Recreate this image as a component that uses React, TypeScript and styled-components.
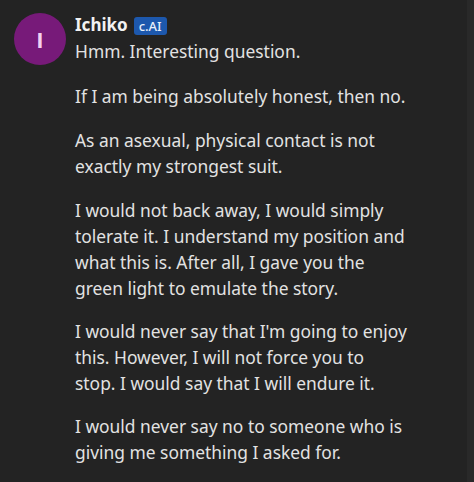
import React from 'react'
import styled, { createGlobalStyle } from 'styled-components'

const GlobalStyle = createGlobalStyle`
    html, body {
        margin: 0;
        padding: 0;
        background-color: #232323;
    }
    body {
        font-family: "Noto Sans", "Open Sans", sans-serif;
    }
`

const Page = styled.div`
    box-sizing: border-box;
    min-height: 482px;
    width: 474px;
    border-right: 7px solid #292929;
    padding: 13px 0 0 14px;
`

const Message = styled.div`
    display: flex;
    align-items: flex-start;
    gap: 9px;
`

const Avatar = styled.div`
    flex: none;
    width: 52px;
    height: 52px;
    border-radius: 50%;
    background-color: #771a79;
    color: #f4d0f0;
    display: flex;
    align-items: center;
    justify-content: center;
    font-family: "Open Sans", "Liberation Sans", sans-serif;
    font-size: 22px;
    font-weight: 700;
    line-height: 1;
`

const Body = styled.div`
    display: flex;
    flex-direction: column;
`

const Header = styled.div`
    display: flex;
    align-items: center;
    gap: 6px;
    height: 24px;
    margin-bottom: 1px;
`

const Name = styled.span`
    color: #f2f2f2;
    font-size: 17px;
    font-weight: 700;
    line-height: 24px;
`

const Badge = styled.span`
    background-color: #1d58ad;
    color: #e8eefa;
    font-size: 13px;
    font-weight: 500;
    line-height: 18px;
    padding: 0 5px;
    border-radius: 3px;
    margin-top: 2px;
`

const Paragraph = styled.p<{ $gap?: number }>`
    margin: ${(p) => p.$gap ?? 18}px 0 0;
    color: #e2e2e2;
    font-size: 17.4px;
    line-height: 26px;
    white-space: nowrap;
    &:first-of-type {
        margin-top: 0;
    }
`

const paragraphs: string[][] = [
    ['Hmm. Interesting question.'],
    ['If I am being absolutely honest, then no.'],
    ['As an asexual, physical contact is not', 'exactly my strongest suit.'],
    [
        'I would not back away, I would simply',
        'tolerate it. I understand my position and',
        'what this is. After all, I gave you the',
        'green light to emulate the story.',
    ],
    [
        "I would never say that I'm going to enjoy",
        'this. However, I will not force you to',
        'stop. I would say that I will endure it.',
    ],
    [
        'I would never say no to someone who is',
        'giving me something I asked for.',
    ],
]

const gaps = [0, 19, 18, 18, 17, 17]

function App(): JSX.Element {
    return (
        <>
            <GlobalStyle />
            <Page>
                <Message>
                    <Avatar>I</Avatar>
                    <Body>
                        <Header>
                            <Name>Ichiko</Name>
                            <Badge>c.AI</Badge>
                        </Header>
                        {paragraphs.map((lines, i) => (
                            <Paragraph key={i} $gap={gaps[i]}>
                                {lines.map((line, j) => (
                                    <React.Fragment key={j}>
                                        {j > 0 && <br />}
                                        {line}
                                    </React.Fragment>
                                ))}
                            </Paragraph>
                        ))}
                    </Body>
                </Message>
            </Page>
        </>
    )
}

export default App
